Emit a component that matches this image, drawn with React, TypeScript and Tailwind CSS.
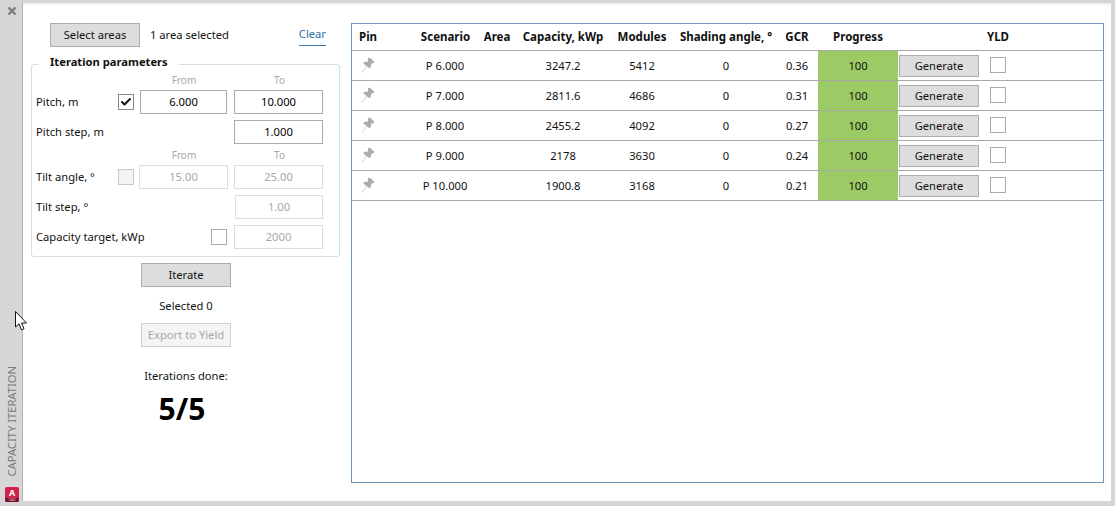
import React from "react";
import { Check } from "lucide-react";

const rows = [
  { scenario: "P 6.000", capacity: "3247.2", modules: "5412", gcr: "0.36" },
  { scenario: "P 7.000", capacity: "2811.6", modules: "4686", gcr: "0.31" },
  { scenario: "P 8.000", capacity: "2455.2", modules: "4092", gcr: "0.27" },
  { scenario: "P 9.000", capacity: "2178", modules: "3630", gcr: "0.24" },
  { scenario: "P 10.000", capacity: "1900.8", modules: "3168", gcr: "0.21" },
];

const gridCols =
  "grid grid-cols-[62px_62px_42px_90px_68px_100px_42px_80px_82px_36px_1fr] items-center";

const PinIcon = () => (
  <svg width="14" height="16" viewBox="0 0 14 16" className="mb-[2px] ml-[9px]">
    <path d="M1 15.5 L5.5 9" stroke="#dedede" strokeWidth="1.2" />
    <path
      d="M7 1 L9 0.8 L13 4.5 L13 6 L10.5 6.5 L9.5 10.5 L8 11 L2.5 6.5 L3 5 L7 4.5 Z"
      fill="#acacac"
    />
  </svg>
);

const CursorIcon = () => (
  <svg width="13" height="20" viewBox="0 0 13 20" className="absolute left-[15px] top-[311px]">
    <path
      d="M0.5 0.5 L0.5 16 L4 12.8 L6.5 18.8 L9 17.8 L6.6 12 L11.5 12 Z"
      fill="#ffffff"
      stroke="#111111"
      strokeWidth="1"
    />
  </svg>
);

const Field = ({
  value,
  disabled,
  className,
}: {
  value: string;
  disabled?: boolean;
  className: string;
}) => (
  <div
    className={`flex h-6 items-center justify-center border ${
      disabled ? "border-[#dcdcdc] text-[#a8a8a8]" : "border-[#ababab] text-black"
    } ${className}`}
  >
    {value}
  </div>
);

const Box = ({ className }: { className?: string }) => (
  <div className={`size-4 border border-[#ababab] ${className ?? ""}`} />
);

const Button = ({ label, className }: { label: string; className: string }) => (
  <div
    className={`flex items-center justify-center border border-[#adadad] bg-[#dddddd] ${className}`}
  >
    {label}
  </div>
);

const SmallHead = ({ mt }: { mt: string }) => (
  <div className={`flex text-[10px] leading-[14px] text-[#a8a8a8] ${mt}`}>
    <span className="ml-[108px] w-[88px] text-center">From</span>
    <span className="ml-[7px] w-[89px] text-center">To</span>
  </div>
);

export default function App() {
  return (
    <div className="relative flex h-[506px] w-[1115px] overflow-hidden bg-[#d6d6d6] pb-[5px] pr-[4px] pt-[3px] font-['Noto_Sans',sans-serif] text-[11.2px] text-[#111111]">
      {/* side tab */}
      <div className="flex w-[23px] flex-col items-center justify-between border-r border-[#b4b4b4] pl-[1px]">
        <svg width="10" height="10" viewBox="0 0 10 10" className="mt-[3px]">
          <path d="M1.5 1.5 L8.5 8.5 M8.5 1.5 L1.5 8.5" stroke="#7d7d7d" strokeWidth="2.4" />
        </svg>
        <div className="flex flex-col items-center">
          <span className="rotate-180 text-[11.2px] leading-[14px] text-[#7a7a7a] [writing-mode:vertical-rl]">
            CAPACITY ITERATION
          </span>
          <div className="-mb-px ml-px mt-[11px] flex h-[15px] w-[14px] flex-col items-center rounded-[2px] bg-[#d3204f]">
            <span className="h-[11px] text-[9px] font-bold leading-[11px] text-white">A</span>
            <span className="h-[4px] w-full rounded-b-[2px] bg-[#7c1030] text-center text-[3.5px] leading-[4px] text-[#e8c0cc]">
              CAD
            </span>
          </div>
        </div>
      </div>

      {/* main content */}
      <div className="flex flex-1 border-t-2 border-[#f1f1f1] bg-white pb-[18px] pr-[7px] pt-[18px]">
        {/* left panel */}
        <div className="flex w-[328px] flex-col">
          <div className="flex h-6 items-center">
            <Button label="Select areas" className="ml-[27px] h-6 w-[90px]" />
            <span className="ml-[10px]">1 area selected</span>
            <span className="ml-auto mr-[25px] mt-[2px] border-b border-[#3b76a8] pb-[2px] text-[#2f6ea5]">
              Clear
            </span>
          </div>

          <div className="relative ml-2 mt-[17px] h-[193px] w-[309px] rounded-[3px] border border-[#d3e0e6] pt-[8px]">
            <span className="absolute -top-[12px] left-[7px] bg-white px-[11px] text-[11.2px] font-bold leading-[18px]">
              Iteration parameters
            </span>
            <SmallHead mt="" />
            <div className="mt-[3px] flex h-6 items-center">
              <span className="ml-[4px] w-[82px]">Pitch, m</span>
              <div className="flex size-4 items-center justify-center border border-[#8a8a8a]">
                <Check size={12} strokeWidth={4} color="#111111" />
              </div>
              <Field value="6.000" className="ml-[6px] w-[87px]" />
              <Field value="10.000" className="ml-[7px] w-[89px]" />
            </div>
            <div className="mt-[6px] flex h-6 items-center">
              <span className="ml-[4px] w-[198px]">Pitch step, m</span>
              <Field value="1.000" className="w-[89px]" />
            </div>
            <SmallHead mt="mt-[4px]" />
            <div className="mt-[3px] flex h-6 items-center">
              <span className="ml-[4px] w-[82px]">Tilt angle, °</span>
              <Box className="bg-[#f3f3f3] !border-[#c8c8c8]" />
              <Field value="15.00" disabled className="ml-[5px] w-[89px]" />
              <Field value="25.00" disabled className="ml-[6px] w-[89px]" />
            </div>
            <div className="mt-[6px] flex h-6 items-center">
              <span className="ml-[4px] w-[199px]">Tilt step, °</span>
              <Field value="1.00" disabled className="w-[88px]" />
            </div>
            <div className="mt-[6px] flex h-6 items-center">
              <span className="ml-[4px] w-[175px]">Capacity target, kWp</span>
              <Box />
              <Field value="2000" disabled className="ml-[7px] w-[89px]" />
            </div>
          </div>

          <div className="mt-[6px] flex flex-col items-center pl-[8px] pr-[10px]">
            <Button label="Iterate" className="h-6 w-[90px]" />
            <span className="mt-[10px] leading-[18px]">Selected 0</span>
            <div className="mt-[8px] flex h-6 w-[90px] items-center justify-center border border-[#cfcfcf] bg-[#f4f4f4] text-[#a8a8a8]">
              Export to Yield
            </div>
            <span className="mt-[20px] leading-[18px]">Iterations done:</span>
            <span className="-ml-[8px] mt-[5px] text-[30px] font-bold leading-[38px] text-black">
              5/5
            </span>
          </div>
        </div>

        {/* results table */}
        <div className="flex-1 border border-[#6f93b8] text-[11.5px]">
          <div className={`${gridCols} h-[27px] border-b border-[#a9a9a9] text-center font-bold leading-[26px]`}>
            <span className="pl-[7px] text-left">Pin</span>
            <span className="pl-[1px]">Scenario</span>
            <span>Area</span>
            <span>Capacity, kWp</span>
            <span>Modules</span>
            <span>Shading angle, °</span>
            <span>GCR</span>
            <span>Progress</span>
            <span />
            <span>YLD</span>
          </div>
          {rows.map((row) => (
            <div
              key={row.scenario}
              className={`${gridCols} h-[30px] border-b border-[#a9a9a9] text-center text-[11.2px]`}
            >
              <PinIcon />
              <span className="pt-px">{row.scenario}</span>
              <span />
              <span className="pt-px">{row.capacity}</span>
              <span className="pt-px">{row.modules}</span>
              <span className="pt-px">0</span>
              <span className="pt-px">{row.gcr}</span>
              <span className="flex h-[29px] items-center justify-center bg-[#9ccb65] pt-px">100</span>
              <Button label="Generate" className="ml-px h-[22px] w-[80px] pt-px" />
              <Box className="mx-auto mb-px" />
            </div>
          ))}
        </div>
      </div>
      <CursorIcon />
    </div>
  );
}
